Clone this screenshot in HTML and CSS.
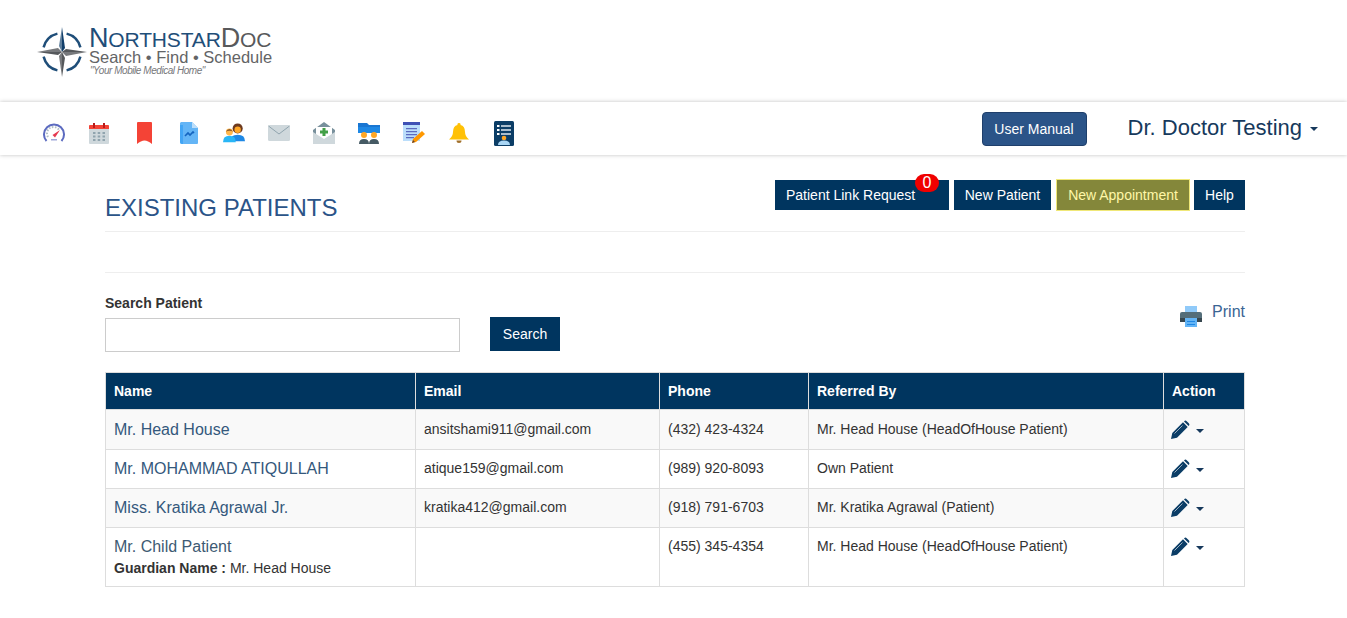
FILE: index.html

```html
<!DOCTYPE html>
<html lang="en">
<head>
  <meta charset="UTF-8" />
  <title>Existing Patients</title>
  <link rel="stylesheet" href="styles.css">
</head>
<body>
  <header class="brand">
    <svg class="brand-mark" width="50" height="52" viewBox="0 0 50 52">
      <path d="M29.600 7.600 A19 19 0 0 1 43.400 21.400 M43.400 30.600 A19 19 0 0 1 29.600 44.400 M20.400 44.400 A19 19 0 0 1 6.600 30.600 M6.600 21.400 A19 19 0 0 1 20.400 7.600" fill="none" stroke="#1f4e79" stroke-width="2.500"/>
      <path d="M25 1 L28 22 L25 26 Z" fill="#123f6b"/>
      <path d="M25 1 L22 20 L25 26 Z" fill="#5f7f9c"/>
      <path d="M0 26 L21 22 L25 26 Z" fill="#77797c"/>
      <path d="M0 26 L21 29 L25 26 Z" fill="#55585b"/>
      <path d="M50 26 L29 23 L25 26 Z" fill="#55585b"/>
      <path d="M50 26 L29 30 L25 26 Z" fill="#77797c"/>
      <path d="M25 51 L22 30 L25 26 Z" fill="#77797c"/>
      <path d="M25 51 L28 32 L25 26 Z" fill="#55585b"/>
    </svg>
    <div class="brand-text">
      <div class="brand-name"><span class="brand-north"><span class="brand-cap">N</span>ORTHSTAR</span><span class="brand-doc"><span class="brand-cap">D</span>OC</span></div>
      <div class="brand-sub">Search • Find • Schedule</div>
      <div class="brand-tag">"Your Mobile Medical Home"</div>
    </div>
  </header>

  <nav class="topnav">
    <div class="nav-icons">
      <a class="nav-icon"><svg width="22" height="20" viewBox="0 0 22 20"><path d="M3.500 18 A10 10 0 1 1 18.500 18" fill="#fff" stroke="#5c6bc0" stroke-width="2"/><path d="M5 14 A6.500 6.500 0 0 1 16 7" fill="none" stroke="#b0bec5" stroke-width="2" stroke-dasharray="1.500 1.500"/><path d="M9.500 12 L17 7 L12 14.500 Z" fill="#e53950"/><rect x="8" y="16" width="6" height="1.500" fill="#9fa8da"/></svg></a>
      <a class="nav-icon"><svg width="20" height="21" viewBox="0 0 20 21"><rect x="0" y="2" width="20" height="19" rx="1" fill="#cfd8dc"/><path d="M0 3 a1 1 0 0 1 1-1 H19 a1 1 0 0 1 1 1 V6 H0 Z" fill="#f44336"/><rect x="4" y="0" width="2" height="5" fill="#b71c1c"/><rect x="14" y="0" width="2" height="5" fill="#b71c1c"/><path d="M4 9h2.500v2H4zM8.700 9h2.500v2H8.700zM13.500 9H16v2h-2.500zM4 12.500h2.500v2H4zM8.700 12.500h2.500v2H8.700zM13.500 12.500H16v2h-2.500zM4 16h2.500v2H4zM8.700 16h2.500v2H8.700zM13.500 16H16v2h-2.500z" fill="#90a4ae"/></svg></a>
      <a class="nav-icon"><svg width="15" height="22" viewBox="0 0 15 22"><path d="M0 1 a1 1 0 0 1 1-1 H14 a1 1 0 0 1 1 1 V22 Q11 18.500 7.500 18.500 Q4 18.500 0 22 Z" fill="#f44336"/></svg></a>
      <a class="nav-icon"><svg width="18" height="22" viewBox="0 0 18 22"><path d="M1 0 H12 L18 6 V21 a1 1 0 0 1-1 1 H2 a2 2 0 0 1-2-2 V1 Z" fill="#64b5f6"/><path d="M12 0 L18 6 H12 Z" fill="#bbdefb"/><path d="M0 3 V20 a2 2 0 0 0 2 2 H3 V3 Z" fill="#42a5f5"/><path d="M5 14 L8 11 L10 13 L13 10 L14 11" fill="none" stroke="#1565c0" stroke-width="1.600"/></svg></a>
      <a class="nav-icon"><svg width="24" height="22" viewBox="0 0 24 22"><circle cx="16" cy="6" r="5.500" fill="#6d3a1f"/><path d="M8 20 q0-7 8-7 q8 0 8 7 Z" fill="#1e88e5"/><circle cx="16" cy="7.500" r="3.500" fill="#ffa726"/><path d="M0 21 q0-7 7-7 q7 0 7 7 Z" fill="#29b6f6"/><circle cx="7" cy="10" r="3.800" fill="#ffb74d"/><path d="M3 9.500 q4-6 8 0 q-4-2-8 0Z" fill="#8d5a2b"/></svg></a>
      <a class="nav-icon"><svg width="22" height="16" viewBox="0 0 22 16"><rect width="22" height="16" rx="1.500" fill="#cfd8dc"/><path d="M0.500 1 L11 9 L21.500 1" fill="none" stroke="#90a4ae" stroke-width="1"/></svg></a>
      <a class="nav-icon"><svg width="22" height="22" viewBox="0 0 22 22"><path d="M0 8 L11 0 L22 8 V21 H0 Z" fill="#78909c"/><rect x="3" y="5" width="16" height="12" fill="#fff"/><path d="M0 10 L11 17 L22 10 V22 H0 Z" fill="#cfd8dc"/><path d="M9.500 6h3v2.500H15v3h-2.500V14h-3v-2.500H7v-3h2.500Z" fill="#43a047"/></svg></a>
      <a class="nav-icon"><svg width="22" height="22" viewBox="0 0 22 22"><path d="M0 1 H9 L11 3 H22 V10 H0 Z" fill="#1976d2"/><path d="M0 5 H22 V11 H0 Z" fill="#1e88e5"/><circle cx="6" cy="13" r="3" fill="#ffa726"/><circle cx="16" cy="13" r="3" fill="#ffa726"/><path d="M1 22 q0-5 5-5 q5 0 5 5 Z M11 22 q0-5 5-5 q5 0 5 5 Z" fill="#455a64"/></svg></a>
      <a class="nav-icon"><svg width="22" height="22" viewBox="0 0 22 22"><rect x="0" y="0" width="17" height="19" fill="#bbdefb"/><rect x="0" y="0" width="17" height="3" fill="#3f51b5"/><path d="M3 6h11v1.200H3zM3 9h11v1.200H3zM3 12h11v1.200H3zM3 15h8v1.200H3z" fill="#5c6bc0"/><path d="M9 21 L10 17 L19 9 L22 12 L13 20 Z" fill="#ff9800"/><path d="M9 21 L10 18 L12 20 Z" fill="#5d4037"/></svg></a>
      <a class="nav-icon"><svg width="20" height="21" viewBox="0 0 20 21"><path d="M10 0 a1.500 1.500 0 0 1 1.500 2 q4.500 1 4.500 7 q0 4 4 7.500 H0 q4-3.500 4-7.500 q0-6 4.500-7 A1.500 1.500 0 0 1 10 0Z" fill="#ffc107"/><path d="M7.500 17.500 h5 a2.500 2.500 0 0 1-5 0Z" fill="#a1702a"/></svg></a>
      <a class="nav-icon"><svg width="20" height="25" viewBox="0 0 20 25"><rect width="20" height="25" rx="1.500" fill="#0b3d66"/><path d="M3 4h2.500v2H3zM3 8h2.500v2H3zM3 12h2.500v2H3z" fill="#fff"/><path d="M7 4.300h10v1.400H7zM7 8.300h10v1.400H7zM7 12.300h10v1.400H7z" fill="#dfe8ee"/><circle cx="10" cy="17" r="2.300" fill="#ffa726"/><path d="M4 24 q0-4.500 6-4.500 q6 0 6 4.500 Z" fill="#a9d6f5"/></svg></a>
    </div>
    <div class="nav-right">
      <a class="manual-btn">User Manual</a>
      <a class="user-menu">Dr. Doctor Testing<span class="caret"></span></a>
    </div>
  </nav>

  <main class="container">
    <div class="page-head">
      <h1 class="page-title">EXISTING PATIENTS</h1>
      <div class="page-actions">
        <a class="btn btn-link-request">Patient Link Request<span class="badge">0</span></a>
        <a class="btn btn-new">New Patient</a>
        <a class="btn btn-olive">New Appointment</a>
        <a class="btn btn-help">Help</a>
      </div>
    </div>
    <div class="spacer-rule"></div>

    <div class="search-row">
      <div class="search-field">
        <label class="search-label" for="search">Search Patient</label>
        <input class="search-input" id="search" type="text" />
      </div>
      <a class="btn btn-search">Search</a>
      <a class="print-link">
        <svg width="22" height="21" viewBox="0 0 22 21"><rect x="5" y="0" width="12" height="7" fill="#90caf9"/><path d="M2 6 H20 a2 2 0 0 1 2 2 V15 a1 1 0 0 1-1 1 H1 a1 1 0 0 1-1-1 V8 a2 2 0 0 1 2-2Z" fill="#546e7a"/><rect x="0" y="12" width="22" height="4" fill="#37474f"/><rect x="5" y="12" width="12" height="9" fill="#64b5f6"/><path d="M7 15h8v1H7zM7 18h8v1H7z" fill="#1e88e5"/></svg>
        <span>Print</span>
      </a>
    </div>

    <table class="patients">
      <thead>
        <tr>
          <th class="col-name">Name</th>
          <th class="col-email">Email</th>
          <th class="col-phone">Phone</th>
          <th class="col-ref">Referred By</th>
          <th>Action</th>
        </tr>
      </thead>
      <tbody>
        <tr>
          <td><a class="patient-name">Mr. Head House</a></td>
          <td>ansitshami911@gmail.com</td>
          <td>(432) 423-4324</td>
          <td>Mr. Head House (HeadOfHouse Patient)</td>
          <td><a class="action"><svg width="19" height="19" viewBox="0 0 19 19"><path d="M0 19 L1.300 13 L12 2.300 L16.700 7 L6 17.700 Z M13.200 1.200 a1.800 1.800 0 0 1 2.500 0 L17.800 3.300 a1.800 1.800 0 0 1 0 2.500 L17.600 6 L13 1.400 Z" fill="#0b3d66"/><path d="M3.500 13.500 L11.500 5.500" stroke="#fff" stroke-width="0.600"/></svg><span class="caret"></span></a></td>
        </tr>
        <tr>
          <td><a class="patient-name">Mr. MOHAMMAD ATIQULLAH</a></td>
          <td>atique159@gmail.com</td>
          <td>(989) 920-8093</td>
          <td>Own Patient</td>
          <td><a class="action"><svg width="19" height="19" viewBox="0 0 19 19"><path d="M0 19 L1.300 13 L12 2.300 L16.700 7 L6 17.700 Z M13.200 1.200 a1.800 1.800 0 0 1 2.500 0 L17.800 3.300 a1.800 1.800 0 0 1 0 2.500 L17.600 6 L13 1.400 Z" fill="#0b3d66"/><path d="M3.500 13.500 L11.500 5.500" stroke="#fff" stroke-width="0.600"/></svg><span class="caret"></span></a></td>
        </tr>
        <tr>
          <td><a class="patient-name">Miss. Kratika Agrawal Jr.</a></td>
          <td>kratika412@gmail.com</td>
          <td>(918) 791-6703</td>
          <td>Mr. Kratika Agrawal (Patient)</td>
          <td><a class="action"><svg width="19" height="19" viewBox="0 0 19 19"><path d="M0 19 L1.300 13 L12 2.300 L16.700 7 L6 17.700 Z M13.200 1.200 a1.800 1.800 0 0 1 2.500 0 L17.800 3.300 a1.800 1.800 0 0 1 0 2.500 L17.600 6 L13 1.400 Z" fill="#0b3d66"/><path d="M3.500 13.500 L11.500 5.500" stroke="#fff" stroke-width="0.600"/></svg><span class="caret"></span></a></td>
        </tr>
        <tr>
          <td>
            <a class="patient-name">Mr. Child Patient</a>
            <div class="guardian"><b>Guardian Name :</b> Mr. Head House</div>
          </td>
          <td></td>
          <td>(455) 345-4354</td>
          <td>Mr. Head House (HeadOfHouse Patient)</td>
          <td><a class="action"><svg width="19" height="19" viewBox="0 0 19 19"><path d="M0 19 L1.300 13 L12 2.300 L16.700 7 L6 17.700 Z M13.200 1.200 a1.800 1.800 0 0 1 2.500 0 L17.800 3.300 a1.800 1.800 0 0 1 0 2.500 L17.600 6 L13 1.400 Z" fill="#0b3d66"/><path d="M3.500 13.500 L11.500 5.500" stroke="#fff" stroke-width="0.600"/></svg><span class="caret"></span></a></td>
        </tr>
      </tbody>
    </table>
  </main>
</body>
</html>
```

FILE: styles.css

```css
* {
  box-sizing: border-box;
}

body {
  margin: 0;
  background: #fff;
  font-family: "Liberation Sans", Arial, sans-serif;
  font-size: 14px;
  color: #333;
}

/* logo */
.brand {
  height: 102px;
  padding: 26px 0 0 37px;
  display: flex;
  align-items: flex-start;
  gap: 2px;
}

.brand-text {
  width: 190px;
  white-space: nowrap;
}

.brand-name {
  height: 24px;
  font-size: 21px;
  line-height: 24px;
  letter-spacing: -0.15px;
}

.brand-cap {
  font-size: 27px;
}

.brand-north {
  color: #1f4e79;
}

.brand-doc {
  color: #58595b;
}

.brand-sub {
  font-size: 16.500px;
  line-height: 15px;
  color: #636466;
}

.brand-tag {
  font-style: italic;
  font-size: 10px;
  line-height: 11px;
  letter-spacing: -0.45px;
  color: #77787b;
  padding-left: 1px;
}

/* nav bar */
.topnav {
  height: 53px;
  padding: 0 29px 0 43px;
  display: flex;
  align-items: center;
  justify-content: space-between;
  box-shadow: 0 0 4px rgba(0,0,0,0.25);
}

.nav-icons {
  display: flex;
  width: 472px;
  justify-content: space-between;
  align-items: center;
  margin-top: 9px;
}

.nav-icon {
  display: flex;
  width: 22px;
  justify-content: center;
}

.nav-right {
  display: flex;
  align-items: center;
  gap: 40px;
}

.manual-btn {
  display: block;
  width: 105px;
  height: 34px;
  margin-right: 1px;
  line-height: 32px;
  text-align: center;
  background: #2b5488;
  border: 1px solid #1f3f6b;
  border-radius: 4px;
  color: #fff;
}

.user-menu {
  font-size: 22px;
  color: #16395c;
  white-space: nowrap;
  margin-top: -2px;
}

.caret {
  display: inline-block;
  width: 0;
  height: 0;
  margin-left: 8px;
  vertical-align: middle;
  border-top: 4px solid #16395c;
  border-left: 4px solid transparent;
  border-right: 4px solid transparent;
}

/* page */
.container {
  width: 1140px;
  margin-left: 105px;
}

.page-head {
  height: 77px;
  border-bottom: 1px solid #eee;
  display: flex;
  justify-content: space-between;
  padding-top: 25px;
}

.page-title {
  margin: 15px 0 0;
  font-size: 24px;
  font-weight: normal;
  line-height: 26px;
  color: #2b5488;
}

.page-actions {
  display: flex;
  align-items: flex-start;
  gap: 5px;
}

.btn {
  display: block;
  height: 30px;
  line-height: 30px;
  padding: 0 11px;
  background: #00355f;
  color: #fff;
  white-space: nowrap;
}

.btn-link-request {
  position: relative;
  width: 174px;
}

.btn-new {
  width: 97px;
  padding: 0;
  text-align: center;
}

.btn-help {
  width: 51px;
  margin-left: -1px;
  padding: 0;
  text-align: center;
}

.badge {
  position: absolute;
  top: -6px;
  right: 10px;
  width: 24px;
  height: 18px;
  line-height: 18px;
  border-radius: 10px;
  background: #f00000;
  color: #fff;
  font-size: 16px;
  text-align: center;
}

.btn-olive {
  width: 134px;
  height: 32px;
  margin-top: -1px;
  padding: 0;
  text-align: center;
  background: #84873a;
  border: 1px solid #f0e878;
  line-height: 30px;
  color: #fff7a8;
}

.spacer-rule {
  height: 41px;
  border-bottom: 1px solid #eee;
}

.search-row {
  display: flex;
  align-items: flex-start;
  height: 99px;
  padding-top: 22px;
}

.search-label {
  display: block;
  font-weight: bold;
  font-size: 14px;
  line-height: 16px;
  margin-bottom: 7px;
  color: #333;
}

.search-input {
  display: block;
  width: 355px;
  height: 34px;
  border: 1px solid #ccc;
  background: #fff;
  padding: 6px 12px;
}

.btn-search {
  margin: 22px 0 0 30px;
  width: 70px;
  height: 34px;
  line-height: 34px;
  padding: 0;
  text-align: center;
}

.print-link {
  margin-left: auto;
  display: flex;
  align-items: flex-start;
  gap: 10px;
  color: #3a6594;
  font-size: 16px;
  line-height: 18px;
  padding-top: 8px;
}

.print-link svg {
  margin-top: 3px;
}

/* table */
.patients {
  width: 1140px;
  border-collapse: collapse;
  table-layout: fixed;
}

.patients th {
  background: #00355f;
  color: #fff;
  font-weight: bold;
  text-align: left;
  height: 37px;
  padding: 0 8px;
  border: 1px solid #ddd;
}

.patients td {
  height: 39px;
  padding: 8px;
  border: 1px solid #ddd;
  vertical-align: top;
  line-height: 20px;
  overflow: hidden;
  white-space: nowrap;
}

.patients tbody tr:first-child td {
  height: 40px;
  padding-top: 9px;
}

.patients tbody tr:nth-child(odd) td {
  background: #f9f9f9;
}

.patients tbody tr:last-child td {
  height: 59px;
}

.col-name {
  width: 310px;
}

.col-email {
  width: 244px;
}

.col-phone {
  width: 149px;
}

.col-ref {
  width: 355px;
}

.patient-name {
  display: block;
  margin-top: 1px;
  font-size: 16px;
  color: #34587c;
}

.patients tbody tr:last-child .patient-name {
  color: #3d5a73;
}

.guardian {
  line-height: 20px;
  margin-top: 1px;
}

.action {
  display: flex;
  align-items: center;
  height: 20px;
  margin-left: -1px;
}

.action .caret {
  margin: 4px 0 0 6px;
}
```
